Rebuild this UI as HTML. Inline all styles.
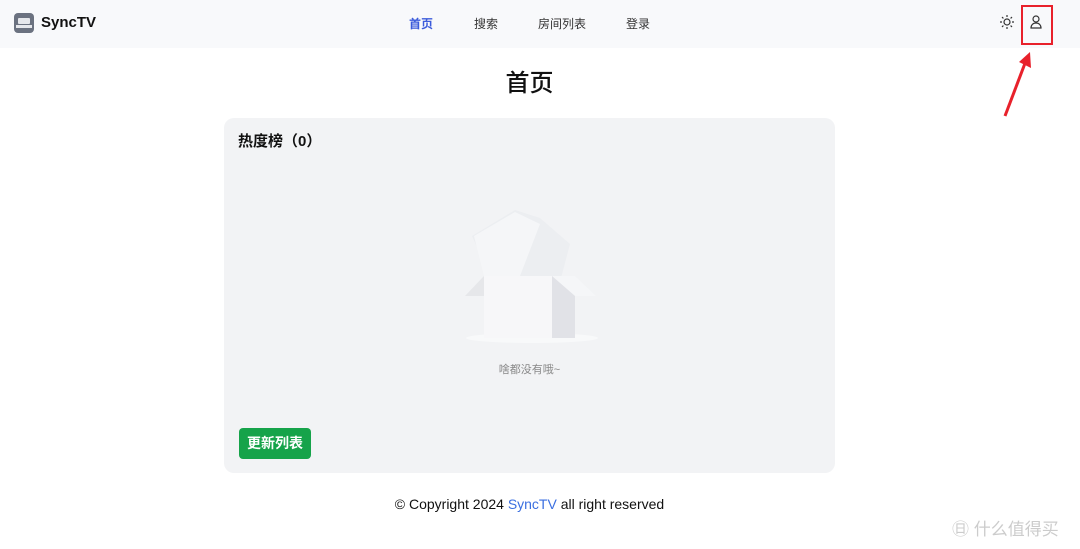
<!DOCTYPE html>
<html><head><meta charset="utf-8"><style>
*{margin:0;padding:0;box-sizing:border-box}
body{width:1080px;height:549px;background:#fff;font-family:"Liberation Sans","Noto Sans CJK SC",sans-serif;position:relative;overflow:hidden;color:#111}
.nav{position:absolute;left:0;top:0;width:1080px;height:48px;background:#f8f9fb}
.logo{position:absolute;left:14px;top:13px;width:20px;height:20px;border-radius:4px;background:#6b7280}
.brand{position:absolute;left:41px;top:14px;font-size:15px;font-weight:bold}
.nl{position:absolute;top:15px;font-size:12px;color:#333}
h1{position:absolute;left:0;width:1059px;top:63px;text-align:center;font-size:24px;font-weight:500}
.card{position:absolute;left:224px;top:118px;width:611px;height:355px;background:#f2f3f5;border-radius:10px}
.t{position:absolute;left:14px;top:12px;font-size:15px;font-weight:bold}
.empty{position:absolute;left:0;width:611px;top:243px;text-align:center;font-size:11px;color:#888}
.btn{position:absolute;left:15px;top:310px;width:72px;height:31px;background:#16a34a;color:#fff;border-radius:4px;font-size:14px;font-weight:bold;text-align:center;line-height:31px}
.foot{position:absolute;left:0;width:1059px;top:496px;text-align:center;font-size:14px}
</style></head><body>
<div class="nav">
<div class="logo"><div style="position:absolute;left:4px;top:5px;width:12px;height:6px;background:#e5e7eb;border-radius:1px"></div><div style="position:absolute;left:2px;top:12px;width:16px;height:3px;background:#e5e7eb"></div></div>
<div class="brand">SyncTV</div>
<div class="nl" style="left:409px;color:#3b5bdb;font-weight:bold">首页</div>
<div class="nl" style="left:474px">搜索</div>
<div class="nl" style="left:538px">房间列表</div>
<div class="nl" style="left:626px">登录</div>
<svg style="position:absolute;left:999px;top:14px" width="16" height="16" viewBox="0 0 16 16" fill="none" stroke="#333" stroke-width="1.2"><circle cx="8" cy="8" r="3"/><path d="M8 1v2M8 13v2M1 8h2M13 8h2M3 3l1.4 1.4M11.6 11.6L13 13M3 13l1.4-1.4M11.6 4.4L13 3"/></svg>
<svg style="position:absolute;left:1029px;top:14px" width="14" height="15" viewBox="0 0 14 15" fill="none" stroke="#333" stroke-width="1.2"><circle cx="7" cy="5" r="3"/><path d="M2 14c0-3 2-5 5-5s5 2 5 5z"/></svg>
</div>
<div style="position:absolute;left:1021px;top:5px;width:32px;height:40px;border:2.5px solid #e8212b"></div>
<svg style="position:absolute;left:1000px;top:50px" width="40" height="70"><path d="M5 66L27 8" stroke="#e8212b" stroke-width="3"/><path d="M19 12L30 2L31 18z" fill="#e8212b"/></svg>
<h1>首页</h1>
<div class="card">
<div class="t">热度榜（0）</div>
<svg style="position:absolute;left:236px;top:86px" width="140" height="144" viewBox="0 0 140 144">
<ellipse cx="72" cy="134" rx="66" ry="5" fill="#f8f9fa"/>
<path d="M12 32L55 6 80 14 110 40 100 78 30 72z" fill="#eceef1"/>
<path d="M14 32L55 8 80 20 60 72 24 72z" fill="#f5f6f8"/>
<path d="M5 92L24 72V92z" fill="#e6e7ea"/>
<path d="M24 72H92V134H24z" fill="#f7f7f9"/>
<path d="M92 72H115V134H92z" fill="#e1e2e7"/>
<path d="M92 72L115 72 136 92 115 92z" fill="#f5f6f8"/>
</svg>
<div class="empty">啥都没有哦~</div>
<div class="btn">更新列表</div>
</div>
<div class="foot">© Copyright 2024 <span style="color:#3b6fe0">SyncTV</span> all right reserved</div>
<div style="position:absolute;left:952px;top:515px;font-size:17px;color:#ccc">㊐ 什么值得买</div>
</body></html>
